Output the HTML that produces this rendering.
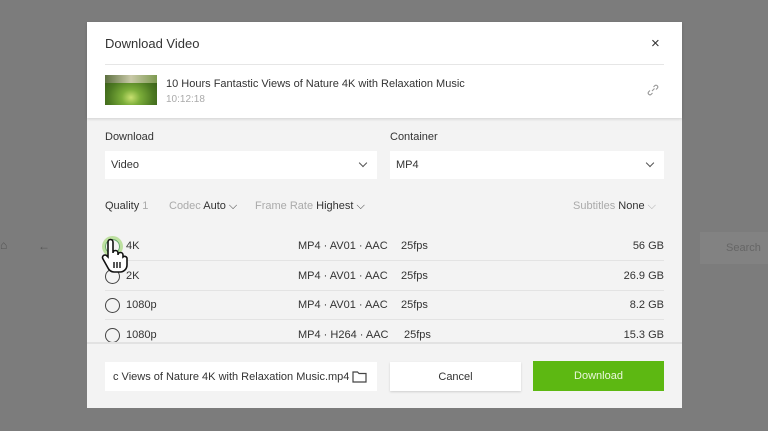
<!DOCTYPE html><html><head><style>
body{margin:0;width:768px;height:431px;background:#7c7c7c;font-family:"Liberation Sans",sans-serif;position:relative;overflow:hidden;color:#333}
.a{position:absolute}
.dlg{left:87px;top:22px;width:595px;height:386px;background:#f3f3f3}
.hd{left:0;top:0;width:595px;height:96px;background:#fff;box-shadow:0 1px 3px rgba(0,0,0,.15)}
.box{background:#fff;height:28px;font-size:11px;line-height:28px;padding-left:6px;box-sizing:border-box}
.chev{position:absolute;right:11px;top:9px;width:5px;height:5px;border-right:1.2px solid #555;border-bottom:1.2px solid #555;transform:rotate(45deg)}
.row{left:18px;width:559px;height:29px;font-size:11px;line-height:31px;border-bottom:1px solid #e3e3e3}
.rad{position:absolute;left:0;top:8px;width:13px;height:13px;border:1.3px solid #444;border-radius:50%}
.sm{font-size:11px}
.g{color:#aaa}
</style></head><body>
<div class="a" style="left:0;top:238px;font-size:12px;color:#555">⌂</div>
<div class="a" style="left:38px;top:239px;font-size:12px;color:#555">←</div>
<div class="a" style="left:700px;top:232px;width:68px;height:32px;background:#828282"></div>
<div class="a" style="left:726px;top:242px;font-size:11px;color:#666">Search</div>
<div class="a dlg">
 <div class="a hd">
  <div class="a" style="left:18px;top:14px;font-size:13px;color:#333">Download Video</div>
  <div class="a" style="left:564px;top:13px;font-size:15px;color:#333">×</div>
  <div class="a" style="left:18px;top:42px;width:559px;height:1px;background:#e6e6e6"></div>
  <div class="a" style="left:18px;top:53px;width:52px;height:30px;background:radial-gradient(ellipse at 50% 75%,#c8e070 0,#7cae3a 25%,#4d7a22 60%,#2f5014 100%)"></div>
  <div class="a" style="left:18px;top:53px;width:52px;height:8px;background:linear-gradient(90deg,#5d7040,#c9c9a8,#7d9a50)"></div>
  <div class="a" style="left:79px;top:56px;font-size:11px">10 Hours Fantastic Views of Nature 4K with Relaxation Music</div>
  <div class="a g" style="left:79px;top:72px;font-size:10px">10:12:18</div>
  <svg class="a" style="left:559px;top:61px" width="14" height="14" viewBox="0 0 14 14" fill="none" stroke="#999" stroke-width="1.1"><path d="M6 8 L8.5 5.5"/><path d="M7.5 4 L9 2.5 a1.8 1.8 0 0 1 2.5 2.5 L10 6.5"/><path d="M6.5 10 L5 11.5 a1.8 1.8 0 0 1 -2.5 -2.5 L4 7.5"/></svg>
 </div>
 <div class="a sm" style="left:18px;top:109px">Download</div>
 <div class="a sm" style="left:303px;top:109px">Container</div>
 <div class="a box" style="left:18px;top:129px;width:272px;line-height:29px">Video<span class="chev"></span></div>
 <div class="a box" style="left:303px;top:129px;width:274px;line-height:29px">MP4<span class="chev"></span></div>
 <div class="a sm" style="left:18px;top:178px">Quality <span class="g">1</span></div>
 <div class="a sm" style="left:82px;top:178px"><span class="g">Codec</span> Auto ⌵</div>
 <div class="a sm" style="left:168px;top:178px"><span class="g">Frame Rate</span> Highest ⌵</div>
 <div class="a sm" style="left:486px;top:178px"><span class="g">Subtitles</span> None <span class="g">⌵</span></div>
 <div class="a row" style="top:209px"><span class="rad" style="border-color:#6a6;box-shadow:0 0 0 3px #bde0a0"></span><span class="a" style="left:21px">4K</span><span class="a" style="left:193px">MP4 · AV01 · AAC</span><span class="a" style="left:296px">25fps</span><span class="a" style="right:0">56 GB</span></div>
 <div class="a row" style="top:239px"><span class="rad"></span><span class="a" style="left:21px">2K</span><span class="a" style="left:193px">MP4 · AV01 · AAC</span><span class="a" style="left:296px">25fps</span><span class="a" style="right:0">26.9 GB</span></div>
 <div class="a row" style="top:268px"><span class="rad"></span><span class="a" style="left:21px">1080p</span><span class="a" style="left:193px">MP4 · AV01 · AAC</span><span class="a" style="left:296px">25fps</span><span class="a" style="right:0">8.2 GB</span></div>
 <div class="a row" style="top:298px;border:0"><span class="rad"></span><span class="a" style="left:21px">1080p</span><span class="a" style="left:193px">MP4 · H264 · AAC</span><span class="a" style="left:299px">25fps</span><span class="a" style="right:0">15.3 GB</span></div>
 <div class="a" style="left:0;top:320px;width:595px;height:2px;background:#e2e2e2"></div>
 <div class="a box" style="left:18px;top:340px;width:272px;height:29px;line-height:30px;padding-left:8px">c Views of Nature 4K with Relaxation Music.mp4</div>
 <svg class="a" style="left:265px;top:348px" width="15" height="13" viewBox="0 0 15 13" fill="none" stroke="#444" stroke-width="1.2"><path d="M1 2 H5.5 L7 3.5 H14 V12 H1 Z"/></svg>
 <div class="a box" style="left:303px;top:340px;width:131px;height:29px;line-height:30px;text-align:center;padding:0;box-shadow:0 1px 2px rgba(0,0,0,.15)">Cancel</div>
 <div class="a box" style="left:446px;top:339px;width:131px;height:30px;line-height:31px;text-align:center;padding:0;background:#5db812;color:#eaf7dc">Download</div>
</div>
<svg class="a" style="left:100px;top:238px" width="30" height="36" viewBox="0 0 30 36"><path d="M8 4 a2.5 2.5 0 0 1 5 0 V15 a2.5 2.5 0 0 1 5 0 V17 a2.5 2.5 0 0 1 5 0 V19 a2.5 2.5 0 0 1 4 1 V27 a7 7 0 0 1 -7 7 H14 a7 7 0 0 1 -6 -4 L3 21 a2.5 2.5 0 0 1 4 -3 L8 19 Z" fill="#fff" stroke="#111" stroke-width="1.6"/><path d="M14 24 V30 M17 24 V30 M20 24 V30" stroke="#111" stroke-width="1.4"/></svg>
</body></html>
